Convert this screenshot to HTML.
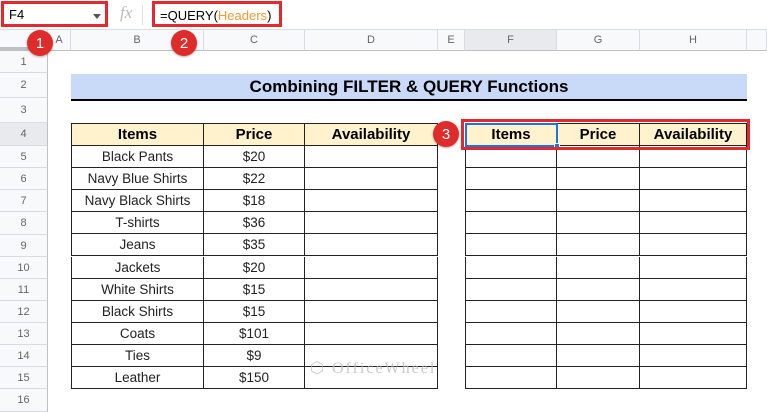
<!DOCTYPE html><html><head><style>
body{margin:0;width:767px;height:412px;overflow:hidden;background:#fff;font-family:"Liberation Sans",Arial,sans-serif;position:relative}
div{box-sizing:border-box}
.a{position:absolute}
.rh{position:absolute;left:0;width:48px;background:#f8f9fa;border-bottom:1px solid #dadce0;border-right:1px solid #c0c0c0;color:#666;font-size:11px;display:flex;align-items:center;justify-content:center}
.ch{position:absolute;top:30px;height:21px;background:#f8f9fa;border-right:1px solid #dadce0;border-bottom:1px solid #c0c0c0;color:#666;font-size:11px;display:flex;align-items:center;justify-content:center}
.c{position:absolute;border-right:1px solid #222;border-bottom:1px solid #222;font-size:13.5px;color:#222;display:flex;align-items:center;justify-content:center}
.h{background:#fff2cc;font-weight:bold;font-size:15px;color:#000}
.b{position:absolute;width:26px;height:26px;border-radius:50%;background:#e02b2b;color:#fff;font-size:15px;display:flex;align-items:center;justify-content:center;box-shadow:0 1px 2px rgba(0,0,0,.3)}
</style></head><body>
<div class="a" style="left:0;top:0;width:767px;height:30px;border-bottom:1px solid #dadce0"></div>
<div class="a" style="left:1px;top:1px;width:107px;height:26px;border:3px solid #e3282e;font-size:13px;padding:3px 0 0 5px">F4<span class="a" style="left:89px;top:10px;border:4px solid transparent;border-top:5px solid #555"></span></div>
<div class="a" style="left:120px;top:3px;font-family:'Liberation Serif',serif;font-style:italic;color:#bbb;font-size:17px">fx</div>
<div class="a" style="left:142px;top:5px;width:1px;height:20px;background:#ddd"></div>
<div class="a" style="left:152px;top:1px;width:130px;height:26px;border:3px solid #e3282e;font-size:13px;padding:4px 0 0 5px;font-family:'Liberation Sans Narrow','Liberation Sans',sans-serif">=QUERY(<span style="color:#f29a38">Headers</span>)</div>
<div class="ch" style="left:0;width:48px;border-bottom:4px solid #c0c0c0"></div>
<div class="ch" style="left:48px;width:23px">A</div>
<div class="ch" style="left:71px;width:133px">B</div>
<div class="ch" style="left:204px;width:101px">C</div>
<div class="ch" style="left:305px;width:133px">D</div>
<div class="ch" style="left:438px;width:27px">E</div>
<div class="ch" style="left:465px;width:92px;background:#e8eaed">F</div>
<div class="ch" style="left:557px;width:83px">G</div>
<div class="ch" style="left:640px;width:107px">H</div>
<div class="ch" style="left:747px;width:20px"></div>
<div class="rh" style="top:51px;height:22px">1</div>
<div class="rh" style="top:73px;height:25px">2</div>
<div class="rh" style="top:98px;height:25px">3</div>
<div class="rh" style="top:123px;height:23px;background:#e8eaed">4</div>
<div class="rh" style="top:146px;height:22px">5</div>
<div class="rh" style="top:168px;height:22px">6</div>
<div class="rh" style="top:190px;height:22px">7</div>
<div class="rh" style="top:212px;height:23px">8</div>
<div class="rh" style="top:235px;height:22px">9</div>
<div class="rh" style="top:257px;height:22px">10</div>
<div class="rh" style="top:279px;height:22px">11</div>
<div class="rh" style="top:301px;height:22px">12</div>
<div class="rh" style="top:323px;height:22px">13</div>
<div class="rh" style="top:345px;height:22px">14</div>
<div class="rh" style="top:367px;height:22px">15</div>
<div class="rh" style="top:389px;height:23px">16</div>
<div class="a" style="left:71px;top:74px;width:676px;height:27px;background:#c9daf8;border-bottom:2px solid #000;font-weight:bold;font-size:17px;display:flex;align-items:center;justify-content:center">Combining FILTER &amp; QUERY Functions</div>
<div id="t"></div>
<script>
var rows=[["Black Pants","$20"],["Navy Blue Shirts","$22"],["Navy Black Shirts","$18"],["T-shirts","$36"],["Jeans","$35"],["Jackets","$20"],["White Shirts","$15"],["Black Shirts","$15"],["Coats","$101"],["Ties","$9"],["Leather","$150"]];
var h='';
function cell(x,y,w,hh,t,cls,extra){h+='<div class="c '+(cls||'')+'" style="left:'+x+'px;top:'+y+'px;width:'+w+'px;height:'+hh+'px;'+(extra||'')+'">'+t+'</div>';}
var L=[[71,133],[204,101],[305,133]],R=[[465,92],[557,83],[640,107]];
var hd=["Items","Price","Availability"];
for(var i=0;i<3;i++){cell(L[i][0],123,L[i][1],23,hd[i],'h',(i==0?'border-left:1px solid #222;':'')+'border-top:1px solid #222');cell(R[i][0],123,R[i][1],23,hd[i],'h',(i==0?'border-left:1px solid #222;':'')+'border-top:1px solid #222');}
for(var r=0;r<11;r++){var y=146+Math.round(r*22.1);for(var i=0;i<3;i++){cell(L[i][0],y,L[i][1],22,i<2?rows[r][i]:'',"",i==0?'border-left:1px solid #222':'');cell(R[i][0],y,R[i][1],22,'','',i==0?'border-left:1px solid #222':'');}}
document.getElementById('t').innerHTML=h;
</script>
<div class="a" style="left:465px;top:123px;width:93px;height:24px;border:2px solid #1a73e8"></div>
<div class="a" style="left:554px;top:143px;width:6px;height:6px;background:#1a73e8;border:1px solid #fff"></div>
<div class="a" style="left:461px;top:119px;width:289px;height:31px;border:3px solid #e3282e"></div>
<div class="a" style="left:310px;top:358px;font-family:'Liberation Serif',serif;font-size:16px;letter-spacing:2px;color:#bbb;opacity:.8">⬡ OfficeWheel</div>
<div class="b" style="left:27px;top:30px">1</div>
<div class="b" style="left:171px;top:30px">2</div>
<div class="b" style="left:433px;top:121px">3</div>
</body></html>
